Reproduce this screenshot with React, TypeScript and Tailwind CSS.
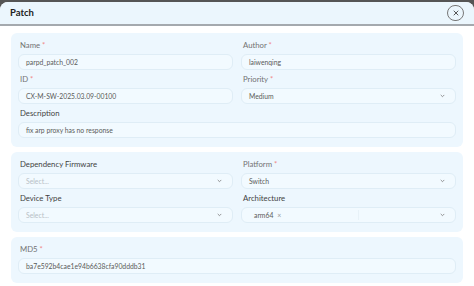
import { ReactNode } from "react";

function Label({ text, required }: { text: string; required?: boolean }) {
  return (
    <div
      className={
        "h-[14px] leading-[14px] text-[7.75px] pl-[2px] " +
        (required ? "text-[#727272]" : "text-[#3f3f3f]")
      }
    >
      {text}
      {required && <span className="text-[#f08a8a]"> *</span>}
    </div>
  );
}

function Box({ children }: { children: ReactNode }) {
  return (
    <div className="mt-[2px] h-[16px] rounded-[6px] border border-[#dfedf6] bg-[#f2faff] flex items-center px-[7px] text-[6.8px] text-[#5a5a5a]">
      {children}
    </div>
  );
}

function Chevron() {
  return (
    <svg width="5" height="4" viewBox="0 0 5 4" className="ml-auto mr-[3px]">
      <path d="M1 1.2 L2.5 2.7 L4 1.2" fill="none" stroke="#7a7a7a" strokeWidth="0.8" strokeLinecap="round" />
    </svg>
  );
}

function TextField({ label, value, required, wide }: { label: string; value: string; required?: boolean; wide?: boolean }) {
  return (
    <div className={wide ? "col-span-2" : ""}>
      <Label text={label} required={required} />
      <Box>{value}</Box>
    </div>
  );
}

function SelectField({ label, value, required }: { label: string; value?: string; required?: boolean }) {
  return (
    <div>
      <Label text={label} required={required} />
      <Box>
        {value ? <span>{value}</span> : <span className="text-[#b8c0c6]">Select...</span>}
        <Chevron />
      </Box>
    </div>
  );
}

function Card({ children, cols = 2 }: { children: ReactNode; cols?: number }) {
  return (
    <div
      className={
        "rounded-[6px] bg-[#edf7fe] px-[7px] pt-[5px] pb-[9px] grid gap-x-[8px] gap-y-[2px] " +
        (cols === 2 ? "grid-cols-2" : "grid-cols-1")
      }
    >
      {children}
    </div>
  );
}

export default function App() {
  return (
    <div className="w-[474px] h-[286px] bg-[#555] overflow-hidden font-['Lato','Open_Sans',sans-serif]">
      <div className="mt-[2px] h-[284px] rounded-t-[8px] bg-white overflow-hidden flex flex-col">
        <div className="h-[24px] shrink-0 bg-[#ebf6fd] border-b-2 border-[#a4a9ae] flex items-center pl-[10px] pr-[10px]">
          <span className="text-[9.5px] font-bold text-[#222]">Patch</span>
          <button className="ml-auto w-[17px] h-[16px] rounded-full border border-[#777] flex items-center justify-center">
            <svg width="6" height="6" viewBox="0 0 6 6">
              <path d="M1 1 L5 5 M5 1 L1 5" stroke="#444" strokeWidth="0.9" strokeLinecap="round" />
            </svg>
          </button>
        </div>
        <div className="px-[11px] pt-[7px] flex flex-col gap-[5px]">
          <Card>
            <TextField label="Name" value="parpd_patch_002" required />
            <TextField label="Author" value="laiwenqing" required />
            <TextField label="ID" value="CX-M-SW-2025.03.09-00100" required />
            <SelectField label="Priority" value="Medium" required />
            <TextField label="Description" value="fix arp proxy has no response" wide />
          </Card>
          <Card>
            <SelectField label="Dependency Firmware" />
            <SelectField label="Platform" value="Switch" required />
            <SelectField label="Device Type" />
            <div>
              <Label text="Architecture" />
              <Box>
                <span className="ml-[5px]">arm64</span>
                <span className="ml-[4px] text-[#999] text-[7px]">×</span>
                <span className="ml-auto mr-[5px] h-[10px] w-px bg-[#e8f2f8]" />
                <Chevron />
              </Box>
            </div>
          </Card>
          <Card cols={1}>
            <TextField label="MD5" value="ba7e592b4cae1e94b6638cfa90dddb31" required />
          </Card>
        </div>
      </div>
    </div>
  );
}
